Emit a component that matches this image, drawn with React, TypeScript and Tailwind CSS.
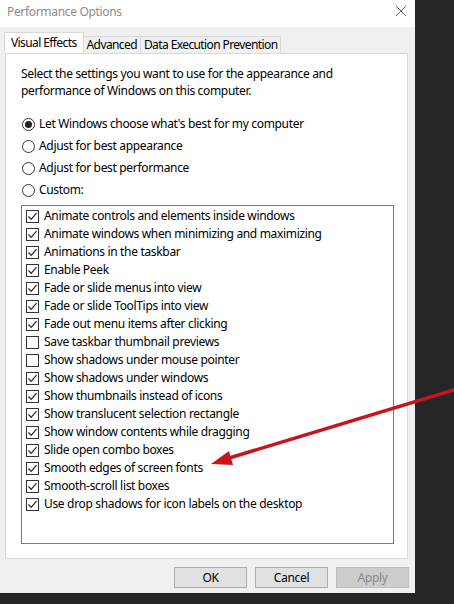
import React from 'react';

const items: { label: string; checked: boolean }[] = [
    { label: 'Animate controls and elements inside windows', checked: true },
    { label: 'Animate windows when minimizing and maximizing', checked: true },
    { label: 'Animations in the taskbar', checked: true },
    { label: 'Enable Peek', checked: true },
    { label: 'Fade or slide menus into view', checked: true },
    { label: 'Fade or slide ToolTips into view', checked: true },
    { label: 'Fade out menu items after clicking', checked: true },
    { label: 'Save taskbar thumbnail previews', checked: false },
    { label: 'Show shadows under mouse pointer', checked: false },
    { label: 'Show shadows under windows', checked: true },
    { label: 'Show thumbnails instead of icons', checked: true },
    { label: 'Show translucent selection rectangle', checked: true },
    { label: 'Show window contents while dragging', checked: true },
    { label: 'Slide open combo boxes', checked: true },
    { label: 'Smooth edges of screen fonts', checked: true },
    { label: 'Smooth-scroll list boxes', checked: true },
    { label: 'Use drop shadows for icon labels on the desktop', checked: true },
];

const radios = [
    { label: "Let Windows choose what's best for my computer", selected: true },
    { label: 'Adjust for best appearance', selected: false },
    { label: 'Adjust for best performance', selected: false },
    { label: 'Custom:', selected: false },
];

function Radio({ selected }: { selected: boolean }) {
    return (
        <span className="w-[13px] h-[13px] rounded-full border border-[#333] bg-white flex items-center justify-center shrink-0">
            {selected && <span className="w-[7px] h-[7px] rounded-full bg-[#222]" />}
        </span>
    );
}

function Checkbox({ checked }: { checked: boolean }) {
    return (
        <span className="w-[13px] h-[13px] border border-[#333] bg-white flex items-center justify-center shrink-0">
            {checked && (
                <svg width="11" height="11" viewBox="0 0 11 11" fill="none">
                    <path d="M1.5 5.5 L4.2 8.3 L9.5 2.2" stroke="#222" strokeWidth="1.2" />
                </svg>
            )}
        </span>
    );
}

function Button({ label, disabled }: { label: string; disabled?: boolean }) {
    return (
        <button
            className={
                disabled
                    ? 'w-[73px] h-[21px] border border-[#bfbfbf] bg-[#cccccc] text-[#8a8a8a] text-[12px] leading-none'
                    : 'w-[73px] h-[21px] border border-[#adadad] bg-[#e1e1e1] text-black text-[12px] leading-none'
            }
        >
            {label}
        </button>
    );
}

export default function App() {
    return (
        <div
            className="relative w-[454px] h-[604px] bg-[#262626] overflow-hidden tracking-[-0.33px]"
            style={{ fontFamily: '"Noto Sans", "Open Sans", sans-serif' }}
        >
            <div className="w-[415px] h-[593px] bg-[#f0f0f0] flex flex-col">
                {/* Title bar */}
                <div className="h-[27px] bg-white flex items-start justify-between pl-[7px] pr-[8px] pt-[3px]">
                    <span className="text-[12px] text-[#8c8c8c]">Performance Options</span>
                    <svg width="12" height="12" viewBox="0 0 12 12" className="mt-[2px]">
                        <path d="M1 1 L11 11 M11 1 L1 11" stroke="#666" strokeWidth="1" />
                    </svg>
                </div>

                {/* Tabs */}
                <div className="flex items-end pl-[4px] mt-[6px] h-[20px] relative z-10 text-[12px] tracking-[-0.6px]">
                    <div className="h-[21px] px-[6px] bg-white border border-b-0 border-[#d9d9d9] flex items-center">
                        Visual Effects
                    </div>
                    <div className="h-[17px] px-[3px] bg-[#f0f0f0] border border-l-0 border-b-0 border-[#d9d9d9] flex items-center">
                        Advanced
                    </div>
                    <div className="h-[17px] px-[3px] bg-[#f0f0f0] border border-l-0 border-b-0 border-[#d9d9d9] flex items-center">
                        Data Execution Prevention
                    </div>
                </div>

                {/* Panel */}
                <div className="ml-[5px] w-[403px] h-[506px] bg-white border border-[#d9d9d9] pt-[11px] pl-[15px] text-[12px] text-black">
                    <p className="leading-[17px]">
                        Select the settings you want to use for the appearance and
                        <br />
                        performance of Windows on this computer.
                    </p>

                    <div className="mt-[14px] flex flex-col">
                        {radios.map((r) => (
                            <div key={r.label} className="h-[22px] flex items-center gap-[4px] pl-[1px]">
                                <Radio selected={r.selected} />
                                <span>{r.label}</span>
                            </div>
                        ))}
                    </div>

                    <div className="mt-[4px] w-[373px] h-[339px] border border-[#7a7a7a] pt-[1px] pl-[4px]">
                        {items.map((it) => (
                            <div key={it.label} className="h-[18px] flex items-center gap-[5px]">
                                <Checkbox checked={it.checked} />
                                <span className="whitespace-nowrap">{it.label}</span>
                            </div>
                        ))}
                    </div>
                </div>

                {/* Buttons */}
                <div className="mt-[8px] flex justify-end gap-[8px] pr-[6px]">
                    <Button label="OK" />
                    <Button label="Cancel" />
                    <Button label="Apply" disabled />
                </div>
            </div>

            {/* Red annotation arrow */}
            <svg className="absolute left-0 top-0 pointer-events-none" width="454" height="604" viewBox="0 0 454 604">
                <line x1="460" y1="388" x2="226" y2="459" stroke="#c8141c" strokeWidth="3.5" />
                <polygon points="211,464 229,451 233,465" fill="#c8141c" />
            </svg>
        </div>
    );
}
